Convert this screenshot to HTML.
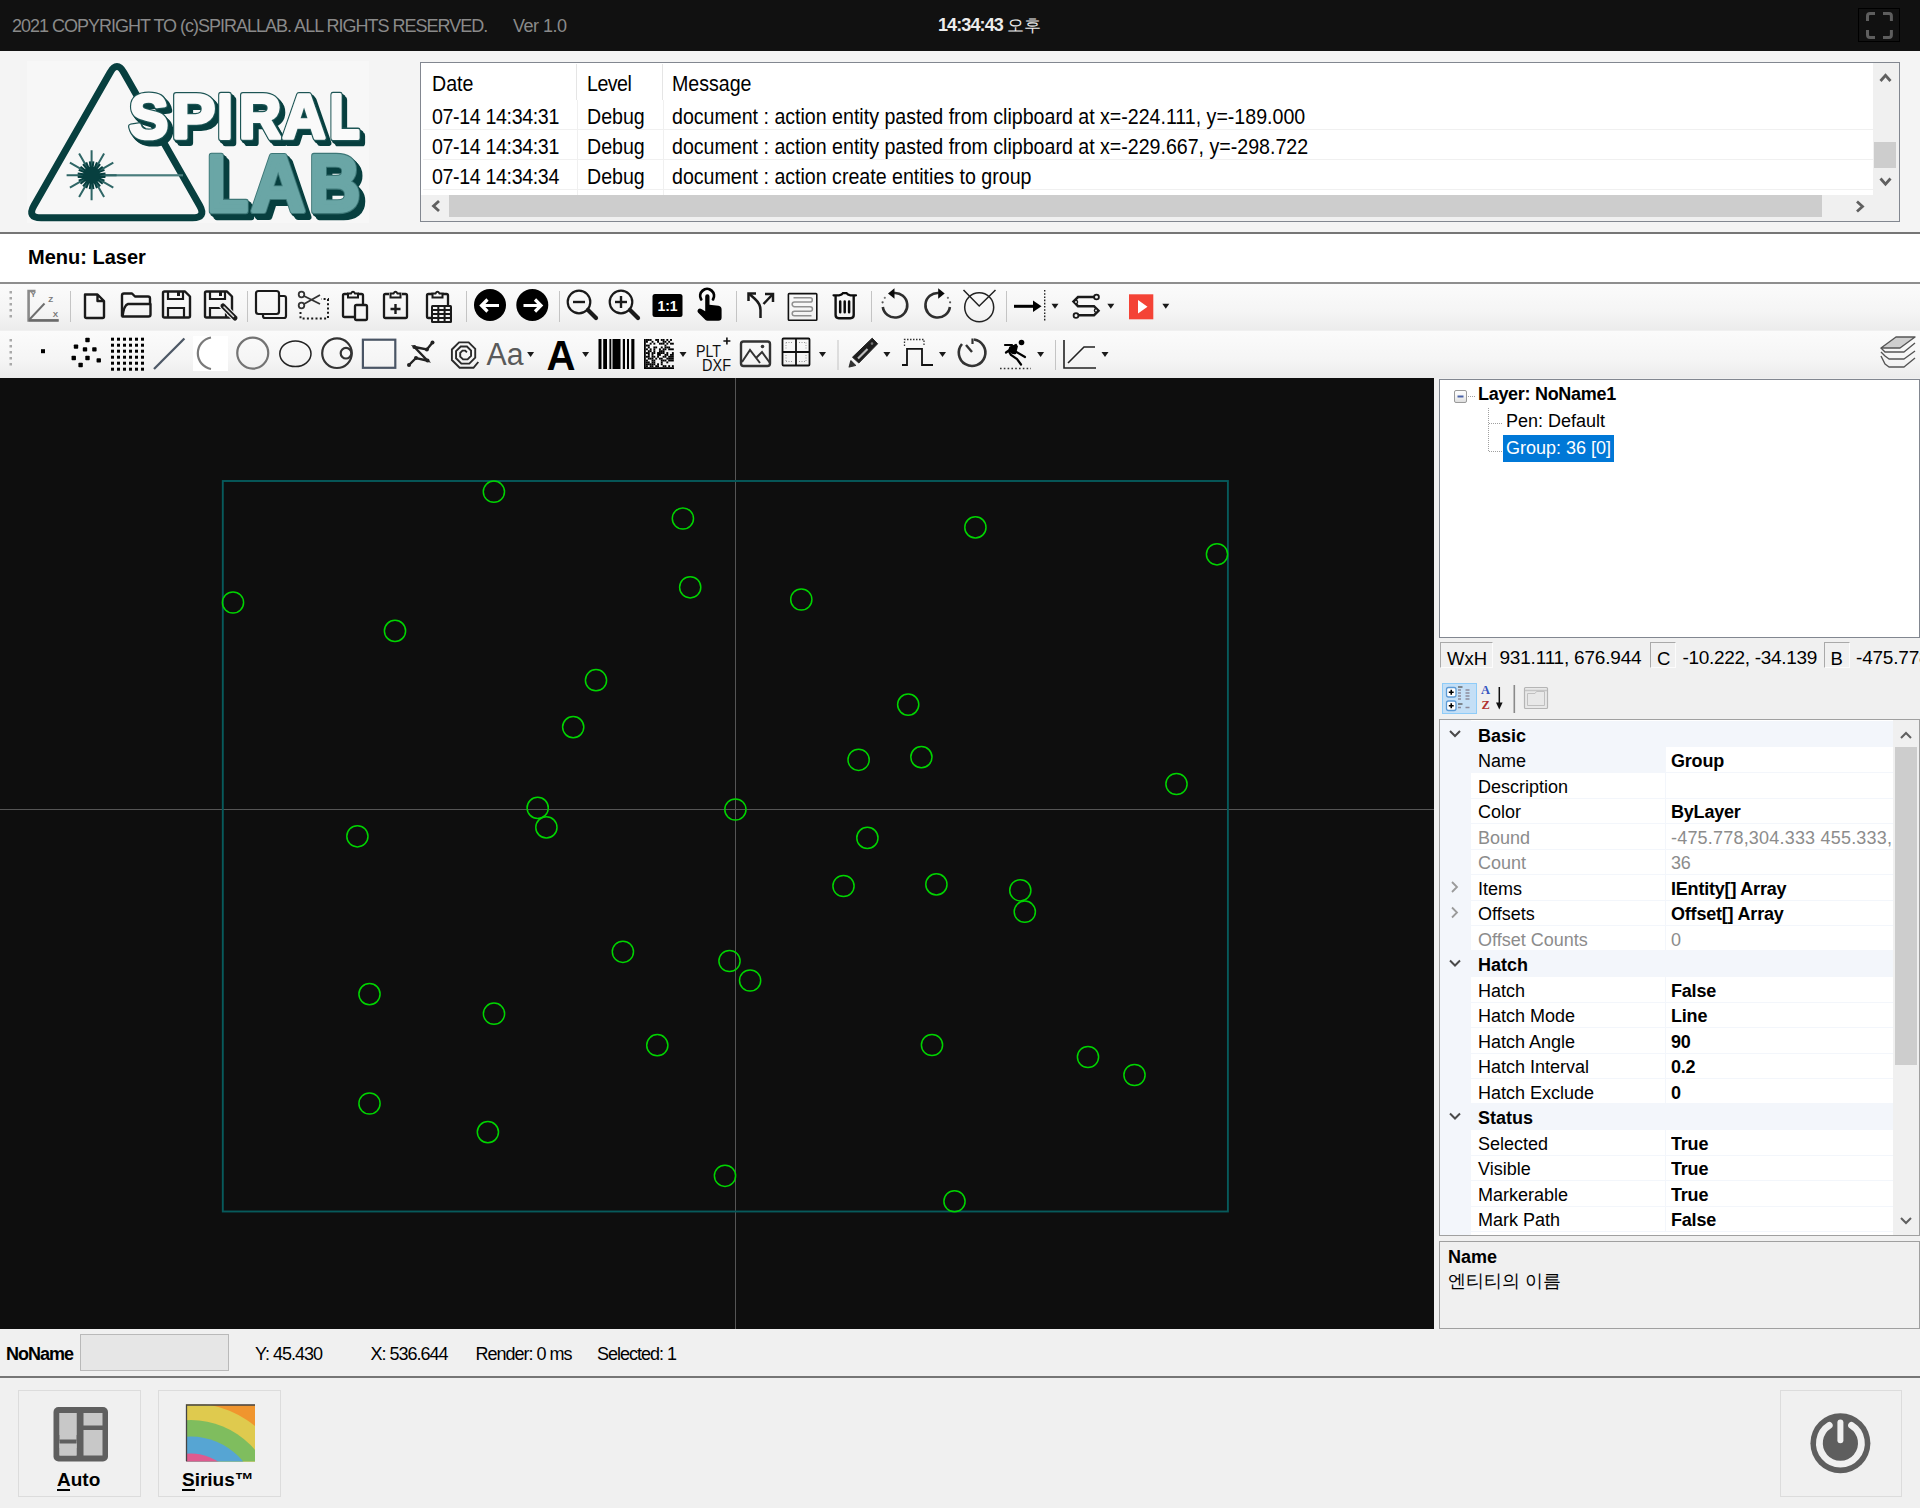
<!DOCTYPE html>
<html><head><meta charset="utf-8">
<style>
*{box-sizing:border-box;margin:0;padding:0}
html,body{width:1920px;height:1508px;overflow:hidden;background:#f0f0f0;font-family:"Liberation Sans",sans-serif;color:#000}
.a{position:absolute;white-space:pre}
#top{left:0;top:0;width:1920px;height:51px;background:#111}
#hdr{left:0;top:51px;width:1920px;height:182px;background:#f4f4f4}
#hline{left:0;top:232px;width:1920px;height:2px;background:#767676}
#menu{left:0;top:234px;width:1920px;height:48px;background:#fff}
#mline{left:0;top:282px;width:1920px;height:2px;background:#8e8e8e}
.tb{left:0;width:1920px;background:linear-gradient(#fbfbfb,#f5f5f5 60%,#ececec)}
#canvas{left:0;top:378px;width:1434px;height:951px;background:#0e0e0e}
#status{left:0;top:1329px;width:1920px;height:47px;background:#f0f0f0}
#sline{left:0;top:1376px;width:1920px;height:2px;background:#767676}
.log{font-size:19.6px;color:#000;transform:scaleY(1.15);transform-origin:0 50%}
.pg{font-size:18px}
.b{font-weight:bold}
</style></head><body>
<div id="top" class="a"></div>
<div class="a" style="left:12px;top:16px;font-size:18px;letter-spacing:-1px;color:#8a8a8a">2021 COPYRIGHT TO (c)SPIRALLAB. ALL RIGHTS RESERVED.</div>
<div class="a" style="left:513px;top:16px;font-size:18px;letter-spacing:-0.5px;color:#8a8a8a">Ver 1.0</div>
<div class="a" style="left:938px;top:15px;font-size:18px;font-weight:bold;letter-spacing:-0.9px;color:#ececec">14:34:43<span style="font-weight:normal;font-size:16.5px;letter-spacing:0"> 오후</span></div>

<div class="a" style="left:1857.5px;top:8px;width:42.5px;height:33.5px;border:1px solid #000"></div><svg class="a" style="left:1850px;top:0" width="60" height="50" viewBox="1850 0 60 50"><path d="M1867.5 21 V16 Q1867.5 13.6 1870 13.6 H1875 M1883 13.6 H1889 Q1891.4 13.6 1891.4 16 V21 M1867.5 30 V35 Q1867.5 37.5 1870 37.5 H1875 M1883 37.5 H1889 Q1891.4 37.5 1891.4 35 V30" fill="none" stroke="#5e5e5e" stroke-width="3"/></svg>
<div id="hdr" class="a"></div>

<div class="a" style="left:27px;top:61px;width:342px;height:162px;background:#f7f7f7"></div>
<!--LOGO--><svg class="a" style="left:0;top:0" width="400" height="240" viewBox="0 0 400 240"><path d="M110.0 72.7 Q117 60.5 123.9 72.7 L199.6 205.6 Q206.5 217.8 192.5 217.8 L41.0 217.8 Q27 217.8 34.0 205.6 Z" fill="none" stroke="#073f3f" stroke-width="7"/><rect x="91" y="174.2" width="92" height="2.2" fill="#4a7d7d"/><path d="M97.6 175.2L116.6 175.2M96.8 178.2L113.3 187.7M94.6 180.4L104.1 196.9M91.6 181.2L91.6 200.2M88.6 180.4L79.1 196.9M86.4 178.2L69.9 187.7M85.6 175.2L66.6 175.2M86.4 172.2L69.9 162.7M88.6 170.0L79.1 153.5M91.6 169.2L91.6 150.2M94.6 170.0L104.1 153.5M96.8 172.2L113.3 162.7" stroke="#2f6666" stroke-width="2"/><path d="M91.6 175.2L105.5 177.0M91.6 175.2L104.5 180.6M91.6 175.2L102.7 183.7M91.6 175.2L100.1 186.3M91.6 175.2L97.0 188.1M91.6 175.2L93.4 189.1M91.6 175.2L89.8 189.1M91.6 175.2L86.2 188.1M91.6 175.2L83.1 186.3M91.6 175.2L80.5 183.7M91.6 175.2L78.7 180.6M91.6 175.2L77.7 177.0M91.6 175.2L77.7 173.4M91.6 175.2L78.7 169.8M91.6 175.2L80.5 166.7M91.6 175.2L83.1 164.1M91.6 175.2L86.2 162.3M91.6 175.2L89.8 161.3M91.6 175.2L93.4 161.3M91.6 175.2L97.0 162.3M91.6 175.2L100.1 164.1M91.6 175.2L102.7 166.7M91.6 175.2L104.5 169.8M91.6 175.2L105.5 173.4" stroke="#073f3f" stroke-width="2"/><circle cx="91.6" cy="175.2" r="8.5" fill="#073f3f"/><text font-family="Liberation Sans" font-weight="bold" font-size="100" transform="matrix(0.5842,0,0,0.6356,130.82,140.03)" fill="#073f3f" stroke="#073f3f" stroke-width="6.0" stroke-linejoin="round" vector-effect="non-scaling-stroke">S</text><text font-family="Liberation Sans" font-weight="bold" font-size="100" transform="matrix(0.5842,0,0,0.6356,132.32,141.68)" fill="#073f3f" stroke="#073f3f" stroke-width="6.0" stroke-linejoin="round" vector-effect="non-scaling-stroke">S</text><text font-family="Liberation Sans" font-weight="bold" font-size="100" transform="matrix(0.5842,0,0,0.6356,133.82,143.33)" fill="#073f3f" stroke="#073f3f" stroke-width="6.0" stroke-linejoin="round" vector-effect="non-scaling-stroke">S</text><text font-family="Liberation Sans" font-weight="bold" font-size="100" transform="matrix(0.6538,0,0,0.6250,173.13,139.65)" fill="#073f3f" stroke="#073f3f" stroke-width="6.0" stroke-linejoin="round" vector-effect="non-scaling-stroke">P</text><text font-family="Liberation Sans" font-weight="bold" font-size="100" transform="matrix(0.6538,0,0,0.6250,174.63,141.30)" fill="#073f3f" stroke="#073f3f" stroke-width="6.0" stroke-linejoin="round" vector-effect="non-scaling-stroke">P</text><text font-family="Liberation Sans" font-weight="bold" font-size="100" transform="matrix(0.6538,0,0,0.6250,176.13,142.95)" fill="#073f3f" stroke="#073f3f" stroke-width="6.0" stroke-linejoin="round" vector-effect="non-scaling-stroke">P</text><text font-family="Liberation Sans" font-weight="bold" font-size="100" transform="matrix(0.5554,0,0,0.6250,218.78,139.65)" fill="#073f3f" stroke="#073f3f" stroke-width="6.0" stroke-linejoin="round" vector-effect="non-scaling-stroke">I</text><text font-family="Liberation Sans" font-weight="bold" font-size="100" transform="matrix(0.5554,0,0,0.6250,220.28,141.30)" fill="#073f3f" stroke="#073f3f" stroke-width="6.0" stroke-linejoin="round" vector-effect="non-scaling-stroke">I</text><text font-family="Liberation Sans" font-weight="bold" font-size="100" transform="matrix(0.5554,0,0,0.6250,221.78,142.95)" fill="#073f3f" stroke="#073f3f" stroke-width="6.0" stroke-linejoin="round" vector-effect="non-scaling-stroke">I</text><text font-family="Liberation Sans" font-weight="bold" font-size="100" transform="matrix(0.5829,0,0,0.6250,240.60,139.65)" fill="#073f3f" stroke="#073f3f" stroke-width="6.0" stroke-linejoin="round" vector-effect="non-scaling-stroke">R</text><text font-family="Liberation Sans" font-weight="bold" font-size="100" transform="matrix(0.5829,0,0,0.6250,242.10,141.30)" fill="#073f3f" stroke="#073f3f" stroke-width="6.0" stroke-linejoin="round" vector-effect="non-scaling-stroke">R</text><text font-family="Liberation Sans" font-weight="bold" font-size="100" transform="matrix(0.5829,0,0,0.6250,243.60,142.95)" fill="#073f3f" stroke="#073f3f" stroke-width="6.0" stroke-linejoin="round" vector-effect="non-scaling-stroke">R</text><text font-family="Liberation Sans" font-weight="bold" font-size="100" transform="matrix(0.5962,0,0,0.6250,284.02,139.65)" fill="#073f3f" stroke="#073f3f" stroke-width="6.0" stroke-linejoin="round" vector-effect="non-scaling-stroke">A</text><text font-family="Liberation Sans" font-weight="bold" font-size="100" transform="matrix(0.5962,0,0,0.6250,285.52,141.30)" fill="#073f3f" stroke="#073f3f" stroke-width="6.0" stroke-linejoin="round" vector-effect="non-scaling-stroke">A</text><text font-family="Liberation Sans" font-weight="bold" font-size="100" transform="matrix(0.5962,0,0,0.6250,287.02,142.95)" fill="#073f3f" stroke="#073f3f" stroke-width="6.0" stroke-linejoin="round" vector-effect="non-scaling-stroke">A</text><text font-family="Liberation Sans" font-weight="bold" font-size="100" transform="matrix(0.4872,0,0,0.6250,331.24,139.65)" fill="#073f3f" stroke="#073f3f" stroke-width="6.0" stroke-linejoin="round" vector-effect="non-scaling-stroke">L</text><text font-family="Liberation Sans" font-weight="bold" font-size="100" transform="matrix(0.4872,0,0,0.6250,332.74,141.30)" fill="#073f3f" stroke="#073f3f" stroke-width="6.0" stroke-linejoin="round" vector-effect="non-scaling-stroke">L</text><text font-family="Liberation Sans" font-weight="bold" font-size="100" transform="matrix(0.4872,0,0,0.6250,334.24,142.95)" fill="#073f3f" stroke="#073f3f" stroke-width="6.0" stroke-linejoin="round" vector-effect="non-scaling-stroke">L</text><text font-family="Liberation Sans" font-weight="bold" font-size="100" transform="matrix(0.5842,0,0,0.6356,129.32,138.38)" fill="#fafafa" stroke="#1d5555" stroke-width="6.0" stroke-linejoin="round" vector-effect="non-scaling-stroke">S</text><text font-family="Liberation Sans" font-weight="bold" font-size="100" transform="matrix(0.5842,0,0,0.6356,129.32,138.38)" fill="#fafafa" stroke="#fafafa" stroke-width="3.6" stroke-linejoin="round" vector-effect="non-scaling-stroke">S</text><text font-family="Liberation Sans" font-weight="bold" font-size="100" transform="matrix(0.6538,0,0,0.6250,171.63,138.00)" fill="#fafafa" stroke="#1d5555" stroke-width="6.0" stroke-linejoin="round" vector-effect="non-scaling-stroke">P</text><text font-family="Liberation Sans" font-weight="bold" font-size="100" transform="matrix(0.6538,0,0,0.6250,171.63,138.00)" fill="#fafafa" stroke="#fafafa" stroke-width="3.6" stroke-linejoin="round" vector-effect="non-scaling-stroke">P</text><text font-family="Liberation Sans" font-weight="bold" font-size="100" transform="matrix(0.5554,0,0,0.6250,217.28,138.00)" fill="#fafafa" stroke="#1d5555" stroke-width="6.0" stroke-linejoin="round" vector-effect="non-scaling-stroke">I</text><text font-family="Liberation Sans" font-weight="bold" font-size="100" transform="matrix(0.5554,0,0,0.6250,217.28,138.00)" fill="#fafafa" stroke="#fafafa" stroke-width="3.6" stroke-linejoin="round" vector-effect="non-scaling-stroke">I</text><text font-family="Liberation Sans" font-weight="bold" font-size="100" transform="matrix(0.5829,0,0,0.6250,239.10,138.00)" fill="#fafafa" stroke="#1d5555" stroke-width="6.0" stroke-linejoin="round" vector-effect="non-scaling-stroke">R</text><text font-family="Liberation Sans" font-weight="bold" font-size="100" transform="matrix(0.5829,0,0,0.6250,239.10,138.00)" fill="#fafafa" stroke="#fafafa" stroke-width="3.6" stroke-linejoin="round" vector-effect="non-scaling-stroke">R</text><text font-family="Liberation Sans" font-weight="bold" font-size="100" transform="matrix(0.5962,0,0,0.6250,282.52,138.00)" fill="#fafafa" stroke="#1d5555" stroke-width="6.0" stroke-linejoin="round" vector-effect="non-scaling-stroke">A</text><text font-family="Liberation Sans" font-weight="bold" font-size="100" transform="matrix(0.5962,0,0,0.6250,282.52,138.00)" fill="#fafafa" stroke="#fafafa" stroke-width="3.6" stroke-linejoin="round" vector-effect="non-scaling-stroke">A</text><text font-family="Liberation Sans" font-weight="bold" font-size="100" transform="matrix(0.4872,0,0,0.6250,329.74,138.00)" fill="#fafafa" stroke="#1d5555" stroke-width="6.0" stroke-linejoin="round" vector-effect="non-scaling-stroke">L</text><text font-family="Liberation Sans" font-weight="bold" font-size="100" transform="matrix(0.4872,0,0,0.6250,329.74,138.00)" fill="#fafafa" stroke="#fafafa" stroke-width="3.6" stroke-linejoin="round" vector-effect="non-scaling-stroke">L</text><text font-family="Liberation Sans" font-weight="bold" font-size="100" transform="matrix(0.6723,0,0,0.7994,208.50,212.65)" fill="#073f3f" stroke="#073f3f" stroke-width="6.0" stroke-linejoin="round" vector-effect="non-scaling-stroke">L</text><text font-family="Liberation Sans" font-weight="bold" font-size="100" transform="matrix(0.6723,0,0,0.7994,210.00,214.30)" fill="#073f3f" stroke="#073f3f" stroke-width="6.0" stroke-linejoin="round" vector-effect="non-scaling-stroke">L</text><text font-family="Liberation Sans" font-weight="bold" font-size="100" transform="matrix(0.6723,0,0,0.7994,211.50,215.95)" fill="#073f3f" stroke="#073f3f" stroke-width="6.0" stroke-linejoin="round" vector-effect="non-scaling-stroke">L</text><text font-family="Liberation Sans" font-weight="bold" font-size="100" transform="matrix(0.6723,0,0,0.7994,212.50,217.05)" fill="#073f3f" stroke="#073f3f" stroke-width="6.0" stroke-linejoin="round" vector-effect="non-scaling-stroke">L</text><text font-family="Liberation Sans" font-weight="bold" font-size="100" transform="matrix(0.7453,0,0,0.7994,252.64,212.65)" fill="#073f3f" stroke="#073f3f" stroke-width="6.0" stroke-linejoin="round" vector-effect="non-scaling-stroke">A</text><text font-family="Liberation Sans" font-weight="bold" font-size="100" transform="matrix(0.7453,0,0,0.7994,254.14,214.30)" fill="#073f3f" stroke="#073f3f" stroke-width="6.0" stroke-linejoin="round" vector-effect="non-scaling-stroke">A</text><text font-family="Liberation Sans" font-weight="bold" font-size="100" transform="matrix(0.7453,0,0,0.7994,255.64,215.95)" fill="#073f3f" stroke="#073f3f" stroke-width="6.0" stroke-linejoin="round" vector-effect="non-scaling-stroke">A</text><text font-family="Liberation Sans" font-weight="bold" font-size="100" transform="matrix(0.7453,0,0,0.7994,256.64,217.05)" fill="#073f3f" stroke="#073f3f" stroke-width="6.0" stroke-linejoin="round" vector-effect="non-scaling-stroke">A</text><text font-family="Liberation Sans" font-weight="bold" font-size="100" transform="matrix(0.7051,0,0,0.7994,310.78,212.65)" fill="#073f3f" stroke="#073f3f" stroke-width="6.0" stroke-linejoin="round" vector-effect="non-scaling-stroke">B</text><text font-family="Liberation Sans" font-weight="bold" font-size="100" transform="matrix(0.7051,0,0,0.7994,312.28,214.30)" fill="#073f3f" stroke="#073f3f" stroke-width="6.0" stroke-linejoin="round" vector-effect="non-scaling-stroke">B</text><text font-family="Liberation Sans" font-weight="bold" font-size="100" transform="matrix(0.7051,0,0,0.7994,313.78,215.95)" fill="#073f3f" stroke="#073f3f" stroke-width="6.0" stroke-linejoin="round" vector-effect="non-scaling-stroke">B</text><text font-family="Liberation Sans" font-weight="bold" font-size="100" transform="matrix(0.7051,0,0,0.7994,314.78,217.05)" fill="#073f3f" stroke="#073f3f" stroke-width="6.0" stroke-linejoin="round" vector-effect="non-scaling-stroke">B</text><text font-family="Liberation Sans" font-weight="bold" font-size="100" transform="matrix(0.6723,0,0,0.7994,207.00,211.00)" fill="#6aa6a6" stroke="#3d7777" stroke-width="6.0" stroke-linejoin="round" vector-effect="non-scaling-stroke">L</text><text font-family="Liberation Sans" font-weight="bold" font-size="100" transform="matrix(0.6723,0,0,0.7994,207.00,211.00)" fill="#6aa6a6" stroke="#6aa6a6" stroke-width="4.0" stroke-linejoin="round" vector-effect="non-scaling-stroke">L</text><text font-family="Liberation Sans" font-weight="bold" font-size="100" transform="matrix(0.7453,0,0,0.7994,251.14,211.00)" fill="#6aa6a6" stroke="#3d7777" stroke-width="6.0" stroke-linejoin="round" vector-effect="non-scaling-stroke">A</text><text font-family="Liberation Sans" font-weight="bold" font-size="100" transform="matrix(0.7453,0,0,0.7994,251.14,211.00)" fill="#6aa6a6" stroke="#6aa6a6" stroke-width="4.0" stroke-linejoin="round" vector-effect="non-scaling-stroke">A</text><text font-family="Liberation Sans" font-weight="bold" font-size="100" transform="matrix(0.7051,0,0,0.7994,309.28,211.00)" fill="#6aa6a6" stroke="#3d7777" stroke-width="6.0" stroke-linejoin="round" vector-effect="non-scaling-stroke">B</text><text font-family="Liberation Sans" font-weight="bold" font-size="100" transform="matrix(0.7051,0,0,0.7994,309.28,211.00)" fill="#6aa6a6" stroke="#6aa6a6" stroke-width="4.0" stroke-linejoin="round" vector-effect="non-scaling-stroke">B</text></svg><!--/LOGO-->
<div class="a" style="left:420px;top:62px;width:1480px;height:160px;border:1px solid #828790;background:#fff"></div>
<div class="a" style="left:576px;top:64px;width:1px;height:36px;background:#e5e5e5"></div>
<div class="a" style="left:662px;top:64px;width:1px;height:36px;background:#e5e5e5"></div>
<div class="a" style="left:577px;top:100px;width:1px;height:95px;background:#f0f0f0"></div>
<div class="a" style="left:663px;top:100px;width:1px;height:95px;background:#f0f0f0"></div>
<div class="a" style="left:423px;top:129px;width:1450px;height:1px;background:#f0f0f0"></div>
<div class="a" style="left:423px;top:159px;width:1450px;height:1px;background:#f0f0f0"></div>
<div class="a" style="left:423px;top:189px;width:1450px;height:1px;background:#f0f0f0"></div>
<div class="a log" style="left:432px;top:72px">Date</div>
<div class="a log" style="left:587px;top:72px;letter-spacing:-0.5px">Level</div>
<div class="a log" style="left:672px;top:72px">Message</div>
<div class="a log" style="left:432px;top:105px;letter-spacing:-0.35px">07-14 14:34:31</div>
<div class="a log" style="left:587px;top:105px">Debug</div>
<div class="a log" style="left:672px;top:105px">document : action entity pasted from clipboard at x=-224.111, y=-189.000</div>
<div class="a log" style="left:432px;top:135px;letter-spacing:-0.35px">07-14 14:34:31</div>
<div class="a log" style="left:587px;top:135px">Debug</div>
<div class="a log" style="left:672px;top:135px">document : action entity pasted from clipboard at x=-229.667, y=-298.722</div>
<div class="a log" style="left:432px;top:165px;letter-spacing:-0.35px">07-14 14:34:34</div>
<div class="a log" style="left:587px;top:165px">Debug</div>
<div class="a log" style="left:672px;top:165px">document : action create entities to group</div>
<!-- v scrollbar -->
<div class="a" style="left:1873px;top:63px;width:26px;height:132px;background:#f0f0f0"></div>
<div class="a" style="left:1874px;top:142px;width:22px;height:26px;background:#cdcdcd"></div>
<svg class="a" style="left:1873px;top:63px" width="26" height="132"><path d="M7.5 18 L12.5 12.3 L17.5 18" fill="none" stroke="#606060" stroke-width="2.8"/><path d="M7.5 115.5 L12.5 121.2 L17.5 115.5" fill="none" stroke="#606060" stroke-width="2.8"/></svg>
<!-- h scrollbar -->
<div class="a" style="left:421px;top:195px;width:1478px;height:26px;background:#f0f0f0"></div>
<div class="a" style="left:449px;top:195px;width:1373px;height:22px;background:#cdcdcd"></div>
<svg class="a" style="left:421px;top:195px" width="1478" height="26"><path d="M18 6 L12.5 11 L18 16" fill="none" stroke="#606060" stroke-width="2.8"/><path d="M1436 6.5 L1441.5 11.5 L1436 16.5" fill="none" stroke="#606060" stroke-width="2.8"/></svg>
<div class="a" style="left:1873px;top:195px;width:26px;height:26px;background:#f0f0f0"></div>
<div id="hline" class="a"></div>
<div id="menu" class="a"></div>
<div class="a b" style="left:28px;top:246px;font-size:20px;color:#000">Menu: Laser</div>
<div class="a tb" style="top:283px;height:47px"></div>
<div class="a tb" style="top:331px;height:47px"></div>
<div id="mline" class="a"></div>

<!--TB--><svg class="a" style="left:0;top:0" width="1920" height="378"><rect x="9.5" y="291" width="2.5" height="2.5" fill="#a9a9a9"/><rect x="9.5" y="297" width="2.5" height="2.5" fill="#a9a9a9"/><rect x="9.5" y="303" width="2.5" height="2.5" fill="#a9a9a9"/><rect x="9.5" y="309" width="2.5" height="2.5" fill="#a9a9a9"/><rect x="9.5" y="315" width="2.5" height="2.5" fill="#a9a9a9"/><rect x="9.5" y="339" width="2.5" height="2.5" fill="#a9a9a9"/><rect x="9.5" y="345" width="2.5" height="2.5" fill="#a9a9a9"/><rect x="9.5" y="351" width="2.5" height="2.5" fill="#a9a9a9"/><rect x="9.5" y="357" width="2.5" height="2.5" fill="#a9a9a9"/><rect x="9.5" y="363" width="2.5" height="2.5" fill="#a9a9a9"/><path d="M35.5 291 H28.6 V320.4 H58.6" fill="none" stroke="#8a8a8a" stroke-width="2.6"/><path d="M28.6 320.4 H58.6" fill="none" stroke="#6a6a6a" stroke-width="2.2"/><path d="M29.5 319.5 L44.5 303.5" fill="none" stroke="#6e6e6e" stroke-width="2"/><text x="30.8" y="297" font-family="Liberation Sans" font-weight="bold" font-size="7.5" fill="#777">Y</text><text x="48.3" y="302" font-family="Liberation Sans" font-weight="bold" font-size="8" fill="#777">Z</text><text x="52.8" y="317" font-family="Liberation Sans" font-weight="bold" font-size="8" fill="#777">X</text><rect x="70" y="291" width="1" height="31" fill="#c4c4c4"/><path d="M85 294.5 H97.5 L104 301 V316.5 Q104 318 102.5 318 H86.5 Q85 318 85 316.5 Z M97.5 294.5 V301 H104" fill="none" stroke="#1a1a1a" stroke-width="2.4" stroke-linejoin="round"/><path d="M122 316.5 V295.5 Q122 293.5 124 293.5 H132 L135 296.5 H148 Q150 296.5 150 298.5 V303" fill="none" stroke="#1a1a1a" stroke-width="2.4" stroke-linejoin="round"/><path d="M122.5 316.5 Q124 305 128 304 H150.5 V314.5 Q150.5 316.5 148.5 316.5 Z" fill="none" stroke="#1a1a1a" stroke-width="2.4" stroke-linejoin="round"/><path d="M163 293 Q163 291.5 164.5 291.5 H185 L190 296.5 V316 Q190 317.5 188.5 317.5 H164.5 Q163 317.5 163 316 Z" fill="none" stroke="#1a1a1a" stroke-width="2.4" stroke-linejoin="round"/><path d="M168 292 V299 H183 V292" fill="none" stroke="#1a1a1a" stroke-width="2.2"/><rect x="177" y="292" width="3" height="4" fill="#1a1a1a"/><path d="M168 317 V308 H184 V317" fill="none" stroke="#1a1a1a" stroke-width="2.2"/><path d="M205 293 Q205 291.5 206.5 291.5 H227 L232 296.5 V316 Q232 317.5 230.5 317.5 H206.5 Q205 317.5 205 316 Z" fill="none" stroke="#1a1a1a" stroke-width="2.4" stroke-linejoin="round"/><path d="M210 292 V299 H225 V292" fill="none" stroke="#1a1a1a" stroke-width="2.2"/><rect x="219" y="292" width="3" height="4" fill="#1a1a1a"/><path d="M210 317 V308 H226 V317" fill="none" stroke="#1a1a1a" stroke-width="2.2"/><rect x="204" y="300" width="0" height="0"/><path d="M222 305 L236 319" stroke="#f5f5f5" stroke-width="7" stroke-linecap="round"/><path d="M223 306 L235 318" stroke="#1a1a1a" stroke-width="5" stroke-linecap="round"/><path d="M224 307 L233.5 316.5" stroke="#ddd" stroke-width="1.5" stroke-linecap="round"/><rect x="247" y="291" width="1" height="31" fill="#c4c4c4"/><rect x="256" y="291" width="23" height="23" rx="2.5" fill="none" stroke="#1a1a1a" stroke-width="2.2"/><path d="M263 314 V316 Q263 318 265 318 H284 Q286 318 286 316 V298 Q286 296 284 296 H279" fill="none" stroke="#1a1a1a" stroke-width="2.2"/><circle cx="301.5" cy="294.5" r="2.8" fill="none" stroke="#333" stroke-width="1.8"/><circle cx="301.5" cy="305.5" r="2.8" fill="none" stroke="#333" stroke-width="1.8"/><path d="M304 296 L320 304 M304 304 L320 295" stroke="#333" stroke-width="1.8"/><path d="M300.5 312 V318.5 H328 V299 H321" fill="none" stroke="#1a1a1a" stroke-width="2" stroke-dasharray="2 2.3"/><path d="M348 294 H344.5 Q343 294 343 295.5 V315.5 Q343 317 344.5 317 H361.5 Q363 317 363 315.5 V295.5 Q363 294 361.5 294 H358" fill="none" stroke="#1a1a1a" stroke-width="2.3"/><path d="M348.0 297.5 V293.5 H351.0 Q353.0 290 355.0 293.5 H358.0 V297.5 Z" fill="none" stroke="#1a1a1a" stroke-width="2"/><rect x="355" y="305" width="12" height="15" rx="1.5" fill="#f6f6f6" stroke="#1a1a1a" stroke-width="2.3"/><path d="M389 294 H385.5 Q384 294 384 295.5 V316.5 Q384 318 385.5 318 H405.5 Q407 318 407 316.5 V295.5 Q407 294 405.5 294 H402" fill="none" stroke="#1a1a1a" stroke-width="2.3"/><path d="M390.5 297.5 V293.5 H393.5 Q395.5 290 397.5 293.5 H400.5 V297.5 Z" fill="none" stroke="#1a1a1a" stroke-width="2"/><path d="M395.5 304 V314 M390.5 309 H400.5" stroke="#1a1a1a" stroke-width="2.4"/><path d="M432 294 H428.5 Q427 294 427 295.5 V316.5 Q427 318 428.5 318 H446.5 Q448 318 448 316.5 V295.5 Q448 294 446.5 294 H443" fill="none" stroke="#1a1a1a" stroke-width="2.3"/><path d="M432.5 297.5 V293.5 H435.5 Q437.5 290 439.5 293.5 H442.5 V297.5 Z" fill="none" stroke="#1a1a1a" stroke-width="2"/><rect x="431" y="305" width="21" height="18" rx="1.5" fill="#1a1a1a"/><rect x="433.0" y="307" width="4.3" height="2" fill="#f5f5f5"/><rect x="439.3" y="307" width="4.3" height="2" fill="#f5f5f5"/><rect x="445.6" y="307" width="4.3" height="2" fill="#f5f5f5"/><rect x="433.0" y="311" width="4.3" height="2" fill="#f5f5f5"/><rect x="439.3" y="311" width="4.3" height="2" fill="#f5f5f5"/><rect x="445.6" y="311" width="4.3" height="2" fill="#f5f5f5"/><rect x="433.0" y="315" width="4.3" height="2" fill="#f5f5f5"/><rect x="439.3" y="315" width="4.3" height="2" fill="#f5f5f5"/><rect x="445.6" y="315" width="4.3" height="2" fill="#f5f5f5"/><rect x="433.0" y="319" width="4.3" height="2" fill="#f5f5f5"/><rect x="439.3" y="319" width="4.3" height="2" fill="#f5f5f5"/><rect x="445.6" y="319" width="4.3" height="2" fill="#f5f5f5"/><rect x="466" y="291" width="1" height="31" fill="#c4c4c4"/><circle cx="490" cy="305" r="16" fill="#000"/><path d="M499 305.5 H482 M487.5 299.5 L481.5 305.5 L487.5 311.5" fill="none" stroke="#fff" stroke-width="3.2"/><circle cx="532.3" cy="305" r="16" fill="#000"/><path d="M523.5 305.5 H541 M535 299.5 L541 305.5 L535 311.5" fill="none" stroke="#fff" stroke-width="3.2"/><rect x="559" y="291" width="1" height="31" fill="#c4c4c4"/><circle cx="579" cy="302" r="11.3" fill="none" stroke="#1a1a1a" stroke-width="2.2"/><path d="M588 310 L596 318" stroke="#1a1a1a" stroke-width="4.2" stroke-linecap="round"/><path d="M573 302 H585" stroke="#1a1a1a" stroke-width="2.4"/><circle cx="621" cy="302" r="11.3" fill="none" stroke="#1a1a1a" stroke-width="2.2"/><path d="M630 310 L638 318" stroke="#1a1a1a" stroke-width="4.2" stroke-linecap="round"/><path d="M615 302 H627" stroke="#1a1a1a" stroke-width="2.4"/><path d="M621 296 V308" stroke="#1a1a1a" stroke-width="2.4"/><rect x="652.5" y="294" width="30" height="23" rx="2.5" fill="#000"/><text x="667.5" y="311" text-anchor="middle" font-family="Liberation Sans" font-weight="bold" font-size="14" fill="#fff">1:1</text><path d="M701.2 299.4 A6.9 6.9 0 1 1 713 299.4" fill="none" stroke="#000" stroke-width="2.8" stroke-linecap="round"/><path d="M705.2 296.5 Q705.2 294.2 707.35 294.2 Q709.5 294.2 709.5 296.5 V304.8 L718.5 305.8 Q721.6 306.3 721.6 309.5 V317.5 Q721.6 320.8 718.3 320.8 H707.5 Q706.3 320.8 705.5 320 L698 312.5 Q696.7 311 698.2 309.3 Q699.6 307.9 701.4 308.9 L705.2 311.2 Z" fill="#000"/><rect x="736" y="291" width="1" height="31" fill="#c4c4c4"/><path d="M760.5 318 V310 Q760.5 304 755 299 L749.5 294" fill="none" stroke="#1a1a1a" stroke-width="2.5"/><path d="M748.5 301 V293.5 H756" fill="none" stroke="#1a1a1a" stroke-width="2.5"/><path d="M763.5 304 L772 295" fill="none" stroke="#1a1a1a" stroke-width="2.5"/><path d="M765 294 H773 V302" fill="none" stroke="#1a1a1a" stroke-width="2.5"/><rect x="788.4" y="293.6" width="28.4" height="26.6" rx="0.8" fill="none" stroke="#111" stroke-width="1.6"/><path d="M793.5 297.8 H810.2 A2.1 2.1 0 0 1 810.2 302 H794.5 A2.35 2.35 0 0 0 794.5 306.7 H810.2 A2.25 2.25 0 0 1 810.2 311.2 H794.5 A2.3 2.3 0 0 0 794.5 315.8 H811.5" fill="none" stroke="#909090" stroke-width="1.5"/><path d="M833.5 295.3 H839 Q842 294.8 843 293.2 H846.5 Q847.5 294.8 850.5 295.3 H856" fill="none" stroke="#0a0a0a" stroke-width="2.2" stroke-linecap="round"/><path d="M835.6 296 V315 Q835.6 318.2 838.8 318.2 H850.5 Q853.7 318.2 853.7 315 V296" fill="none" stroke="#111" stroke-width="2.4"/><path d="M840.2 301.5 V312.3 M844.7 301.5 V312.3 M849.1 301.5 V312.3" stroke="#0a0a0a" stroke-width="2.5" stroke-linecap="round"/><rect x="871" y="291" width="1" height="31" fill="#c4c4c4"/><path d="M894 293 A12.3 12.3 0 1 1 882.8 307" fill="none" stroke="#2e2e2e" stroke-width="2.6"/><circle cx="882.6" cy="302.3" r="1.1" fill="#555"/><circle cx="884.8" cy="297.8" r="1.1" fill="#777"/><path d="M894.5 288.3 L888 293.5 L894.5 298.7 Z" fill="#0a0a0a"/><path d="M938.7 293 A12.3 12.3 0 1 0 949.9 307" fill="none" stroke="#2e2e2e" stroke-width="2.6"/><circle cx="950.1" cy="302.3" r="1.1" fill="#555"/><circle cx="947.9" cy="297.8" r="1.1" fill="#777"/><path d="M938.2 288.3 L944.7 293.5 L938.2 298.7 Z" fill="#0a0a0a"/><circle cx="979.2" cy="307.2" r="14.5" fill="none" stroke="#222" stroke-width="1.5"/><path d="M963.5 290 L979.2 306 L995.5 290" fill="none" stroke="#222" stroke-width="1.5"/><rect x="1006" y="291" width="1" height="31" fill="#c4c4c4"/><path d="M1014 306.3 H1035" stroke="#000" stroke-width="3"/><path d="M1033 300.5 L1041.5 306.3 L1033 312 Z" fill="#000"/><path d="M1044.7 290 V321" stroke="#222" stroke-width="1.4" stroke-dasharray="1.6 1.6"/><path d="M1051.5 303.8 H1058.5 L1055 308.8 Z" fill="#1a1a1a"/><path d="M1096.5 297 H1078 L1073.5 301.5 L1078 306.2 H1094 L1098.5 310.7 L1094 315.3 H1076" fill="none" stroke="#1a1a1a" stroke-width="2.5"/><circle cx="1096.5" cy="297" r="2.4" fill="#f5f5f5" stroke="#1a1a1a" stroke-width="1.8"/><circle cx="1076" cy="315.5" r="2.4" fill="#f5f5f5" stroke="#1a1a1a" stroke-width="1.8"/><circle cx="1076" cy="302" r="1.6" fill="#f5f5f5" stroke="#1a1a1a" stroke-width="1.4"/><circle cx="1096" cy="310.5" r="1.6" fill="#f5f5f5" stroke="#1a1a1a" stroke-width="1.4"/><path d="M1107.3 303.8 H1114.3 L1110.8 308.8 Z" fill="#1a1a1a"/><rect x="1129" y="294.3" width="24.3" height="25" fill="#f44336"/><path d="M1138 300 L1147.5 306.8 L1138 313.5 Z" fill="#fff"/><path d="M1162.3 303.8 H1169.3 L1165.8 308.8 Z" fill="#1a1a1a"/><rect x="41" y="349.2" width="4" height="4" fill="#000"/><rect x="85.3" y="337.8" width="4.4" height="4.4" rx="0.8" fill="#000"/><rect x="73.8" y="344.40000000000003" width="4.4" height="4.4" rx="0.8" fill="#000"/><rect x="82.8" y="347.2" width="4.4" height="4.4" rx="0.8" fill="#000"/><rect x="92.2" y="347.2" width="4.4" height="4.4" rx="0.8" fill="#000"/><rect x="71.55" y="355.8" width="4.4" height="4.4" rx="0.8" fill="#000"/><rect x="85.3" y="355.8" width="4.4" height="4.4" rx="0.8" fill="#000"/><rect x="96.55" y="358.2" width="4.4" height="4.4" rx="0.8" fill="#000"/><rect x="78.39999999999999" y="362.8" width="4.4" height="4.4" rx="0.8" fill="#000"/><rect x="111" y="337.7" width="3" height="3" fill="#000"/><rect x="117" y="337.7" width="3" height="3" fill="#000"/><rect x="123" y="337.7" width="3" height="3" fill="#000"/><rect x="129" y="337.7" width="3" height="3" fill="#000"/><rect x="135" y="337.7" width="3" height="3" fill="#000"/><rect x="141" y="337.7" width="3" height="3" fill="#000"/><rect x="111" y="343.7" width="3" height="3" fill="#000"/><rect x="117" y="343.7" width="3" height="3" fill="#000"/><rect x="123" y="343.7" width="3" height="3" fill="#000"/><rect x="129" y="343.7" width="3" height="3" fill="#000"/><rect x="135" y="343.7" width="3" height="3" fill="#000"/><rect x="141" y="343.7" width="3" height="3" fill="#000"/><rect x="111" y="349.7" width="3" height="3" fill="#000"/><rect x="117" y="349.7" width="3" height="3" fill="#000"/><rect x="123" y="349.7" width="3" height="3" fill="#000"/><rect x="129" y="349.7" width="3" height="3" fill="#000"/><rect x="135" y="349.7" width="3" height="3" fill="#000"/><rect x="141" y="349.7" width="3" height="3" fill="#000"/><rect x="111" y="355.7" width="3" height="3" fill="#000"/><rect x="117" y="355.7" width="3" height="3" fill="#000"/><rect x="123" y="355.7" width="3" height="3" fill="#000"/><rect x="129" y="355.7" width="3" height="3" fill="#000"/><rect x="135" y="355.7" width="3" height="3" fill="#000"/><rect x="141" y="355.7" width="3" height="3" fill="#000"/><rect x="111" y="361.7" width="3" height="3" fill="#000"/><rect x="117" y="361.7" width="3" height="3" fill="#000"/><rect x="123" y="361.7" width="3" height="3" fill="#000"/><rect x="129" y="361.7" width="3" height="3" fill="#000"/><rect x="135" y="361.7" width="3" height="3" fill="#000"/><rect x="141" y="361.7" width="3" height="3" fill="#000"/><rect x="111" y="367.7" width="3" height="3" fill="#000"/><rect x="117" y="367.7" width="3" height="3" fill="#000"/><rect x="123" y="367.7" width="3" height="3" fill="#000"/><rect x="129" y="367.7" width="3" height="3" fill="#000"/><rect x="135" y="367.7" width="3" height="3" fill="#000"/><rect x="141" y="367.7" width="3" height="3" fill="#000"/><path d="M154 369 L184.4 338.5" stroke="#4d5866" stroke-width="2.3"/><rect x="193" y="336" width="35" height="35" fill="#fff"/><path d="M211 337.5 A16 16 0 0 0 211 369" fill="none" stroke="#7a7a7a" stroke-width="2.2"/><circle cx="252.75" cy="353.1" r="15.5" fill="none" stroke="#737373" stroke-width="2.2"/><ellipse cx="295.4" cy="353.75" rx="15.6" ry="12.8" fill="none" stroke="#222" stroke-width="1.5"/><circle cx="337" cy="353.2" r="14.8" fill="none" stroke="#333" stroke-width="2.2"/><circle cx="346" cy="353.2" r="5.3" fill="#f8f8f8" stroke="#333" stroke-width="2.2"/><rect x="362.9" y="339.7" width="32.4" height="28.1" fill="none" stroke="#4a5565" stroke-width="2.2"/><path d="M409 365 L416 358 L427.5 360.6 L414.4 347 L426.9 349.4 L432.5 342.5" fill="none" stroke="#222" stroke-width="2.4"/><circle cx="409" cy="365" r="2" fill="#222"/><circle cx="416" cy="358" r="2" fill="#222"/><circle cx="427.5" cy="360.6" r="2" fill="#222"/><circle cx="414.4" cy="347" r="2" fill="#222"/><circle cx="426.9" cy="349.4" r="2" fill="#222"/><circle cx="432.5" cy="342.5" r="2" fill="#222"/><polyline points="466.90,352.31 465.25,350.66 462.48,350.66 460.22,352.92 460.22,356.55 463.09,359.42 467.58,359.42 471.06,355.94 471.06,350.59 466.97,346.50 460.76,346.50 456.06,351.20 456.06,358.27 461.37,363.58 469.30,363.58 475.22,357.66 475.22,348.87 468.69,342.34 459.03,342.34 451.90,349.47 451.90,360.00 459.64,367.74 473.50,367.74 478.3,362" fill="none" stroke="#2a2a2a" stroke-width="1.9" stroke-linejoin="miter"/><text x="486.5" y="365" font-family="Liberation Sans" font-size="31" fill="#5a5a5a" textLength="37" lengthAdjust="spacingAndGlyphs">Aa</text><path d="M527.1 351.9 H534.1 L530.6 356.9 Z" fill="#1a1a1a"/><text x="546.5" y="370" font-family="Liberation Sans" font-weight="bold" font-size="42" fill="#000" textLength="29" lengthAdjust="spacingAndGlyphs">A</text><path d="M582.1 351.9 H589.1 L585.6 356.9 Z" fill="#1a1a1a"/><rect x="598.5" y="339" width="3" height="30" fill="#000"/><rect x="603.2" y="339" width="3.8" height="30" fill="#000"/><rect x="609.4" y="339" width="1.9" height="30" fill="#000"/><rect x="612.5" y="339" width="8" height="30" fill="#000"/><rect x="622.8" y="339" width="2.2" height="30" fill="#000"/><rect x="627" y="339" width="2" height="30" fill="#000"/><rect x="631.3" y="339" width="3.1" height="30" fill="#000"/><rect x="644" y="339" width="1.8" height="30" fill="#000"/><rect x="644" y="367.2" width="30" height="1.8" fill="#000"/><rect x="646.00" y="339.00" width="1.9" height="1.9" fill="#000"/><rect x="647.85" y="339.00" width="1.9" height="1.9" fill="#000"/><rect x="649.70" y="339.00" width="1.9" height="1.9" fill="#000"/><rect x="655.25" y="339.00" width="1.9" height="1.9" fill="#000"/><rect x="657.10" y="339.00" width="1.9" height="1.9" fill="#000"/><rect x="660.80" y="339.00" width="1.9" height="1.9" fill="#000"/><rect x="662.65" y="339.00" width="1.9" height="1.9" fill="#000"/><rect x="666.35" y="339.00" width="1.9" height="1.9" fill="#000"/><rect x="670.05" y="339.00" width="1.9" height="1.9" fill="#000"/><rect x="646.00" y="340.87" width="1.9" height="1.9" fill="#000"/><rect x="651.55" y="340.87" width="1.9" height="1.9" fill="#000"/><rect x="657.10" y="340.87" width="1.9" height="1.9" fill="#000"/><rect x="662.65" y="340.87" width="1.9" height="1.9" fill="#000"/><rect x="664.50" y="340.87" width="1.9" height="1.9" fill="#000"/><rect x="668.20" y="340.87" width="1.9" height="1.9" fill="#000"/><rect x="649.70" y="342.74" width="1.9" height="1.9" fill="#000"/><rect x="653.40" y="342.74" width="1.9" height="1.9" fill="#000"/><rect x="658.95" y="342.74" width="1.9" height="1.9" fill="#000"/><rect x="660.80" y="342.74" width="1.9" height="1.9" fill="#000"/><rect x="662.65" y="342.74" width="1.9" height="1.9" fill="#000"/><rect x="666.35" y="342.74" width="1.9" height="1.9" fill="#000"/><rect x="670.05" y="342.74" width="1.9" height="1.9" fill="#000"/><rect x="671.90" y="342.74" width="1.9" height="1.9" fill="#000"/><rect x="646.00" y="344.61" width="1.9" height="1.9" fill="#000"/><rect x="647.85" y="344.61" width="1.9" height="1.9" fill="#000"/><rect x="664.50" y="344.61" width="1.9" height="1.9" fill="#000"/><rect x="647.85" y="346.48" width="1.9" height="1.9" fill="#000"/><rect x="653.40" y="346.48" width="1.9" height="1.9" fill="#000"/><rect x="655.25" y="346.48" width="1.9" height="1.9" fill="#000"/><rect x="660.80" y="346.48" width="1.9" height="1.9" fill="#000"/><rect x="664.50" y="346.48" width="1.9" height="1.9" fill="#000"/><rect x="666.35" y="346.48" width="1.9" height="1.9" fill="#000"/><rect x="668.20" y="346.48" width="1.9" height="1.9" fill="#000"/><rect x="646.00" y="348.35" width="1.9" height="1.9" fill="#000"/><rect x="649.70" y="348.35" width="1.9" height="1.9" fill="#000"/><rect x="653.40" y="348.35" width="1.9" height="1.9" fill="#000"/><rect x="658.95" y="348.35" width="1.9" height="1.9" fill="#000"/><rect x="662.65" y="348.35" width="1.9" height="1.9" fill="#000"/><rect x="664.50" y="348.35" width="1.9" height="1.9" fill="#000"/><rect x="668.20" y="348.35" width="1.9" height="1.9" fill="#000"/><rect x="670.05" y="348.35" width="1.9" height="1.9" fill="#000"/><rect x="671.90" y="348.35" width="1.9" height="1.9" fill="#000"/><rect x="647.85" y="350.22" width="1.9" height="1.9" fill="#000"/><rect x="649.70" y="350.22" width="1.9" height="1.9" fill="#000"/><rect x="653.40" y="350.22" width="1.9" height="1.9" fill="#000"/><rect x="658.95" y="350.22" width="1.9" height="1.9" fill="#000"/><rect x="660.80" y="350.22" width="1.9" height="1.9" fill="#000"/><rect x="662.65" y="350.22" width="1.9" height="1.9" fill="#000"/><rect x="646.00" y="352.09" width="1.9" height="1.9" fill="#000"/><rect x="647.85" y="352.09" width="1.9" height="1.9" fill="#000"/><rect x="651.55" y="352.09" width="1.9" height="1.9" fill="#000"/><rect x="653.40" y="352.09" width="1.9" height="1.9" fill="#000"/><rect x="657.10" y="352.09" width="1.9" height="1.9" fill="#000"/><rect x="658.95" y="352.09" width="1.9" height="1.9" fill="#000"/><rect x="660.80" y="352.09" width="1.9" height="1.9" fill="#000"/><rect x="662.65" y="352.09" width="1.9" height="1.9" fill="#000"/><rect x="666.35" y="352.09" width="1.9" height="1.9" fill="#000"/><rect x="671.90" y="352.09" width="1.9" height="1.9" fill="#000"/><rect x="647.85" y="353.96" width="1.9" height="1.9" fill="#000"/><rect x="651.55" y="353.96" width="1.9" height="1.9" fill="#000"/><rect x="657.10" y="353.96" width="1.9" height="1.9" fill="#000"/><rect x="658.95" y="353.96" width="1.9" height="1.9" fill="#000"/><rect x="664.50" y="353.96" width="1.9" height="1.9" fill="#000"/><rect x="666.35" y="353.96" width="1.9" height="1.9" fill="#000"/><rect x="670.05" y="353.96" width="1.9" height="1.9" fill="#000"/><rect x="671.90" y="353.96" width="1.9" height="1.9" fill="#000"/><rect x="646.00" y="355.83" width="1.9" height="1.9" fill="#000"/><rect x="647.85" y="355.83" width="1.9" height="1.9" fill="#000"/><rect x="651.55" y="355.83" width="1.9" height="1.9" fill="#000"/><rect x="653.40" y="355.83" width="1.9" height="1.9" fill="#000"/><rect x="657.10" y="355.83" width="1.9" height="1.9" fill="#000"/><rect x="662.65" y="355.83" width="1.9" height="1.9" fill="#000"/><rect x="664.50" y="355.83" width="1.9" height="1.9" fill="#000"/><rect x="668.20" y="355.83" width="1.9" height="1.9" fill="#000"/><rect x="670.05" y="355.83" width="1.9" height="1.9" fill="#000"/><rect x="671.90" y="355.83" width="1.9" height="1.9" fill="#000"/><rect x="647.85" y="357.70" width="1.9" height="1.9" fill="#000"/><rect x="649.70" y="357.70" width="1.9" height="1.9" fill="#000"/><rect x="651.55" y="357.70" width="1.9" height="1.9" fill="#000"/><rect x="655.25" y="357.70" width="1.9" height="1.9" fill="#000"/><rect x="658.95" y="357.70" width="1.9" height="1.9" fill="#000"/><rect x="660.80" y="357.70" width="1.9" height="1.9" fill="#000"/><rect x="666.35" y="357.70" width="1.9" height="1.9" fill="#000"/><rect x="668.20" y="357.70" width="1.9" height="1.9" fill="#000"/><rect x="670.05" y="357.70" width="1.9" height="1.9" fill="#000"/><rect x="671.90" y="357.70" width="1.9" height="1.9" fill="#000"/><rect x="646.00" y="359.57" width="1.9" height="1.9" fill="#000"/><rect x="651.55" y="359.57" width="1.9" height="1.9" fill="#000"/><rect x="653.40" y="359.57" width="1.9" height="1.9" fill="#000"/><rect x="660.80" y="359.57" width="1.9" height="1.9" fill="#000"/><rect x="662.65" y="359.57" width="1.9" height="1.9" fill="#000"/><rect x="664.50" y="359.57" width="1.9" height="1.9" fill="#000"/><rect x="668.20" y="359.57" width="1.9" height="1.9" fill="#000"/><rect x="670.05" y="359.57" width="1.9" height="1.9" fill="#000"/><rect x="671.90" y="359.57" width="1.9" height="1.9" fill="#000"/><rect x="646.00" y="361.44" width="1.9" height="1.9" fill="#000"/><rect x="647.85" y="361.44" width="1.9" height="1.9" fill="#000"/><rect x="651.55" y="361.44" width="1.9" height="1.9" fill="#000"/><rect x="653.40" y="361.44" width="1.9" height="1.9" fill="#000"/><rect x="660.80" y="361.44" width="1.9" height="1.9" fill="#000"/><rect x="666.35" y="361.44" width="1.9" height="1.9" fill="#000"/><rect x="646.00" y="363.31" width="1.9" height="1.9" fill="#000"/><rect x="647.85" y="363.31" width="1.9" height="1.9" fill="#000"/><rect x="649.70" y="363.31" width="1.9" height="1.9" fill="#000"/><rect x="651.55" y="363.31" width="1.9" height="1.9" fill="#000"/><rect x="653.40" y="363.31" width="1.9" height="1.9" fill="#000"/><rect x="657.10" y="363.31" width="1.9" height="1.9" fill="#000"/><rect x="660.80" y="363.31" width="1.9" height="1.9" fill="#000"/><rect x="646.00" y="365.18" width="1.9" height="1.9" fill="#000"/><rect x="649.70" y="365.18" width="1.9" height="1.9" fill="#000"/><rect x="651.55" y="365.18" width="1.9" height="1.9" fill="#000"/><rect x="655.25" y="365.18" width="1.9" height="1.9" fill="#000"/><rect x="657.10" y="365.18" width="1.9" height="1.9" fill="#000"/><rect x="662.65" y="365.18" width="1.9" height="1.9" fill="#000"/><rect x="664.50" y="365.18" width="1.9" height="1.9" fill="#000"/><rect x="668.20" y="365.18" width="1.9" height="1.9" fill="#000"/><rect x="671.90" y="365.18" width="1.9" height="1.9" fill="#000"/><path d="M679.5 351.9 H686.5 L683 356.9 Z" fill="#1a1a1a"/><text x="696" y="357" font-family="Liberation Sans" font-size="16" fill="#111" textLength="25" lengthAdjust="spacingAndGlyphs">PLT</text><text x="702" y="370.6" font-family="Liberation Sans" font-size="16" fill="#111" textLength="29" lengthAdjust="spacingAndGlyphs">DXF</text><path d="M726.9 337.5 V344.5 M723.4 341 H730.4" stroke="#111" stroke-width="1.6"/><rect x="741" y="341.5" width="29" height="24.5" rx="2.5" fill="none" stroke="#333" stroke-width="2.4"/><path d="M742 362 L750 350 L760 363 M756 358 L762 352 L770 363" fill="none" stroke="#333" stroke-width="2"/><circle cx="762.5" cy="346.5" r="1.8" fill="#333"/><rect x="782.5" y="338.5" width="27" height="27" rx="1" fill="none" stroke="#111" stroke-width="1.8"/><path d="M796 338.5 V365.5 M782.5 352 H809.5" stroke="#111" stroke-width="1.8"/><path d="M786 342.5 H793 M799 342.5 H806 M786 361.5 H793 M799 361.5 H806 M786 342.5 V349 M806 342.5 V349 M786 355 V361.5 M806 355 V361.5" stroke="#999" stroke-width="1" stroke-dasharray="1 1.5"/><path d="M819.0 351.9 H826.0 L822.5 356.9 Z" fill="#1a1a1a"/><rect x="837.5" y="340" width="1" height="30" fill="#c4c4c4"/><path d="M852.5 357.2 L872.2 338.2 L877.6 343.8 L858.8 363 Z" fill="#1e1e1e" stroke="#1e1e1e" stroke-width="1" stroke-linejoin="round"/><path d="M858 358.5 L867.5 349" stroke="#bdbdbd" stroke-width="2.2"/><circle cx="872" cy="343.6" r="1.3" fill="#777"/><path d="M849.2 367 L850.8 360.8 L855.5 365.4 Z" fill="#333" stroke="#333" stroke-width="1.2" stroke-linejoin="round"/><path d="M883.4 351.9 H890.4 L886.9 356.9 Z" fill="#1a1a1a"/><path d="M902 365 H907 V348.8 H922 V365 H933" fill="none" stroke="#111" stroke-width="1.8"/><path d="M904.5 346 V339.5 H924 V346" fill="none" stroke="#333" stroke-width="1.3" stroke-dasharray="1.5 1.5"/><path d="M939.0 351.9 H946.0 L942.5 356.9 Z" fill="#1a1a1a"/><path d="M974 339.5 A13.3 13.3 0 1 1 962 344" fill="none" stroke="#333" stroke-width="2.6"/><path d="M966 345 L972 352" stroke="#333" stroke-width="2.4"/><path d="M972.5 338.5 V344" stroke="#333" stroke-width="2.2"/><circle cx="1021.5" cy="342.5" r="2.8" fill="#000"/><path d="M1016 345 L1010 348.5 Q1008 351 1011 355 L1017 359 L1021 364.5 M1013 350 L1025 357 M1005 345 H1012 M1006 352.5 L1011 349" fill="none" stroke="#000" stroke-width="2.2" stroke-linecap="round"/><path d="M1009 347 Q1015 343 1018 346 L1016 354 Q1012 355 1010 352 Z" fill="#000"/><path d="M1000 368.5 H1031" stroke="#333" stroke-width="1.6" stroke-dasharray="1.6 2.2"/><path d="M1037.1 351.9 H1044.1 L1040.6 356.9 Z" fill="#1a1a1a"/><rect x="1055" y="340" width="1" height="30" fill="#c4c4c4"/><path d="M1064 340 V368 H1096" fill="none" stroke="#222" stroke-width="1.6"/><path d="M1068 363 L1084 347 H1095" fill="none" stroke="#222" stroke-width="1.6"/><path d="M1101.5 351.9 H1108.5 L1105 356.9 Z" fill="#1a1a1a"/><path d="M1881 348 L1896 337 H1915 L1900 348 Z" fill="#cfcfcf" stroke="#555" stroke-width="1.4" stroke-linejoin="round"/><path d="M1881 348 L1885 352 H1904 L1915 343 M1881 352 L1885 356 L1889 359 H1904 L1915 351 M1881 356 L1885 364 L1889 367 H1904 L1915 358" fill="none" stroke="#555" stroke-width="1.4" stroke-linejoin="round"/></svg><!--/TB-->
<div id="canvas" class="a"></div><!--CV--><svg class="a" style="left:0;top:378px" width="1434" height="951" viewBox="0 378 1434 951"><rect x="735" y="378" width="1" height="951" fill="#555"/><rect x="0" y="809" width="1434" height="1" fill="#555"/><rect x="222.8" y="481" width="1005.1" height="730.5" fill="none" stroke="#075a5b" stroke-width="1.9"/><circle cx="493.9" cy="491.7" r="10.6" fill="none" stroke="#00d400" stroke-width="1.5"/><circle cx="682.9" cy="518.5" r="10.6" fill="none" stroke="#00d400" stroke-width="1.5"/><circle cx="975.4" cy="527.4" r="10.6" fill="none" stroke="#00d400" stroke-width="1.5"/><circle cx="1217.0" cy="554.3" r="10.6" fill="none" stroke="#00d400" stroke-width="1.5"/><circle cx="233.0" cy="602.5" r="10.6" fill="none" stroke="#00d400" stroke-width="1.5"/><circle cx="395.0" cy="630.9" r="10.6" fill="none" stroke="#00d400" stroke-width="1.5"/><circle cx="690.2" cy="587.3" r="10.6" fill="none" stroke="#00d400" stroke-width="1.5"/><circle cx="801.3" cy="599.5" r="10.6" fill="none" stroke="#00d400" stroke-width="1.5"/><circle cx="596.0" cy="680.2" r="10.6" fill="none" stroke="#00d400" stroke-width="1.5"/><circle cx="573.2" cy="727.1" r="10.6" fill="none" stroke="#00d400" stroke-width="1.5"/><circle cx="908.2" cy="704.6" r="10.6" fill="none" stroke="#00d400" stroke-width="1.5"/><circle cx="858.6" cy="759.8" r="10.6" fill="none" stroke="#00d400" stroke-width="1.5"/><circle cx="921.4" cy="757.1" r="10.6" fill="none" stroke="#00d400" stroke-width="1.5"/><circle cx="1176.5" cy="784" r="10.6" fill="none" stroke="#00d400" stroke-width="1.5"/><circle cx="537.7" cy="807.9" r="10.6" fill="none" stroke="#00d400" stroke-width="1.5"/><circle cx="546.4" cy="827.4" r="10.6" fill="none" stroke="#00d400" stroke-width="1.5"/><circle cx="735.4" cy="809.5" r="10.6" fill="none" stroke="#00d400" stroke-width="1.5"/><circle cx="357.4" cy="836.3" r="10.6" fill="none" stroke="#00d400" stroke-width="1.5"/><circle cx="867.4" cy="837.9" r="10.6" fill="none" stroke="#00d400" stroke-width="1.5"/><circle cx="843.5" cy="886" r="10.6" fill="none" stroke="#00d400" stroke-width="1.5"/><circle cx="936.4" cy="884.4" r="10.6" fill="none" stroke="#00d400" stroke-width="1.5"/><circle cx="1020.3" cy="890.3" r="10.6" fill="none" stroke="#00d400" stroke-width="1.5"/><circle cx="1024.8" cy="911.7" r="10.6" fill="none" stroke="#00d400" stroke-width="1.5"/><circle cx="622.9" cy="951.8" r="10.6" fill="none" stroke="#00d400" stroke-width="1.5"/><circle cx="729.5" cy="961" r="10.6" fill="none" stroke="#00d400" stroke-width="1.5"/><circle cx="750.1" cy="980.5" r="10.6" fill="none" stroke="#00d400" stroke-width="1.5"/><circle cx="369.5" cy="994.1" r="10.6" fill="none" stroke="#00d400" stroke-width="1.5"/><circle cx="494.0" cy="1013.7" r="10.6" fill="none" stroke="#00d400" stroke-width="1.5"/><circle cx="657.3" cy="1045.2" r="10.6" fill="none" stroke="#00d400" stroke-width="1.5"/><circle cx="932" cy="1045" r="10.6" fill="none" stroke="#00d400" stroke-width="1.5"/><circle cx="1088" cy="1057" r="10.6" fill="none" stroke="#00d400" stroke-width="1.5"/><circle cx="1134.5" cy="1075" r="10.6" fill="none" stroke="#00d400" stroke-width="1.5"/><circle cx="369.5" cy="1103.5" r="10.6" fill="none" stroke="#00d400" stroke-width="1.5"/><circle cx="487.9" cy="1132.1" r="10.6" fill="none" stroke="#00d400" stroke-width="1.5"/><circle cx="725.0" cy="1175.8" r="10.6" fill="none" stroke="#00d400" stroke-width="1.5"/><circle cx="954.5" cy="1201.25" r="10.6" fill="none" stroke="#00d400" stroke-width="1.5"/></svg><!--/CV-->
<!--RP--><div class="a" style="left:1439px;top:379px;width:481px;height:259px;border:1px solid #828790;background:#fff"></div><svg class="a" style="left:1439px;top:379px" width="200" height="100" viewBox="1439 379 200 100"><defs><linearGradient id="eb" x1="0" y1="0" x2="0" y2="1"><stop offset="0" stop-color="#fff"/><stop offset="0.5" stop-color="#f4f4f4"/><stop offset="1" stop-color="#dcdcdc"/></linearGradient></defs><rect x="1454.5" y="390.5" width="12" height="12" rx="1.5" fill="url(#eb)" stroke="#9a9a9a" stroke-width="1"/><rect x="1457.5" y="395.5" width="6" height="2" fill="#4b63a8"/><path d="M1468 396.5 H1476" stroke="#a0a0a0" stroke-width="1" stroke-dasharray="1 1"/><path d="M1488.5 408 V451.5 M1489 423.5 H1502 M1489 451.5 H1502" stroke="#a0a0a0" stroke-width="1" stroke-dasharray="1 1"/></svg><div class="a b" style="left:1478px;top:384px;font-size:18px;letter-spacing:-0.3px">Layer: NoName1</div><div class="a" style="left:1506px;top:411px;font-size:18px;">Pen: Default</div><div class="a" style="left:1503px;top:435px;width:111px;height:27px;background:#0078d7"></div><div class="a" style="left:1506px;top:438px;font-size:18px;color:#fff">Group: 36 [0]</div><div class="a" style="left:1440px;top:642px;width:53px;height:26px;border-top:1.5px solid #a9a9a9;border-left:1.5px solid #a9a9a9;border-right:1px solid #fcfcfc;border-bottom:1px solid #fcfcfc"></div><div class="a" style="left:1447px;top:647.5px;font-size:18.5px">WxH</div><div class="a" style="left:1499.5px;top:647px;font-size:19px;letter-spacing:-0.2px">931.111, 676.944</div><div class="a" style="left:1650px;top:642px;width:26px;height:26px;border-top:1.5px solid #a9a9a9;border-left:1.5px solid #a9a9a9;border-right:1px solid #fcfcfc;border-bottom:1px solid #fcfcfc"></div><div class="a" style="left:1657px;top:647.5px;font-size:18.5px">C</div><div class="a" style="left:1682.5px;top:647px;font-size:19px;letter-spacing:-0.3px">-10.222, -34.139</div><div class="a" style="left:1824px;top:642px;width:26px;height:26px;border-top:1.5px solid #a9a9a9;border-left:1.5px solid #a9a9a9;border-right:1px solid #fcfcfc;border-bottom:1px solid #fcfcfc"></div><div class="a" style="left:1830.5px;top:647.5px;font-size:18.5px">B</div><div class="a" style="left:1856px;top:647px;font-size:19px;letter-spacing:-0.2px">-475.778</div><div class="a" style="left:1441.5px;top:682.5px;width:35px;height:31px;background:#c4dff6;border:1px solid #8fccf8"></div><svg class="a" style="left:1430px;top:672px" width="130" height="46" viewBox="1430 672 130 46"><rect x="1446.5" y="687.5" width="9.5" height="9.5" rx="2" fill="#fff" stroke="#5d9bd6" stroke-width="1.3"/><path d="M1448.8 692.2 H1453.7 M1451.25 689.8 V694.7" stroke="#000" stroke-width="1.6"/><rect x="1446.5" y="701" width="9.5" height="9.5" rx="2" fill="#fff" stroke="#5d9bd6" stroke-width="1.3"/><path d="M1448.8 705.7 H1453.7 M1451.25 703.3 V708.2" stroke="#000" stroke-width="1.6"/><path d="M1458 687 h4.5" stroke="#555" stroke-width="1.3"/><path d="M1458 704 h4.5" stroke="#555" stroke-width="1.3"/><path d="M1458 690 h3 M1465.5 690 h4 M1458 693 h3 M1465.5 693 h4 M1458 696 h3 M1465.5 696 h4 M1458 699 h3 M1465.5 699 h4 M1458 707.5 h3 M1465.5 707.5 h4" stroke="#8c8c9c" stroke-width="1.4"/><text x="1481" y="693.5" font-family="Liberation Serif" font-size="12.5" font-weight="bold" fill="#3555c0">A</text><text x="1481.5" y="709" font-family="Liberation Serif" font-size="12.5" font-weight="bold" fill="#b03030">Z</text><path d="M1499.3 687 V705" stroke="#111" stroke-width="1.5"/><path d="M1496 702.5 L1499.3 709.5 L1502.6 702.5 Z" fill="#111"/><rect x="1513.5" y="685" width="1.6" height="28" fill="#8a8a8a"/><rect x="1524.5" y="687.5" width="23" height="21" rx="1" fill="#e8e8e8" stroke="#b5b5b5" stroke-width="1.2"/><path d="M1525 690.5 H1547" stroke="#c5c5c5" stroke-width="1.5"/><path d="M1527.5 705.5 V693.5 H1535 L1536.5 691.5 H1544.5 V705.5 Z" fill="none" stroke="#c0c0c0" stroke-width="1"/></svg><div class="a" style="left:1439px;top:719px;width:481px;height:517px;border:1px solid #a0a0a0;background:#fff"></div><div class="a" style="left:1440px;top:720px;width:31px;height:515px;background:#f3f6fb"></div><div class="a" style="left:1440px;top:720.5px;width:453px;height:26.5px;background:#f3f6fb"></div><div class="a b" style="left:1478px;top:725.6px;font-size:18px;">Basic</div><div class="a" style="left:1471px;top:747.0px;width:194px;height:25px;background:#f3f6fb"></div><div class="a" style="left:1478px;top:751.1px;font-size:18px;color:#000">Name</div><div class="a" style="left:1671px;top:751.1px;font-size:18px;font-weight:bold;color:#000;letter-spacing:-0.2px;width:222px;overflow:hidden">Group</div><div class="a" style="left:1471px;top:772.0px;width:422px;height:1px;background:#f3f6fb"></div><div class="a" style="left:1665px;top:747.0px;width:1px;height:25px;background:#f3f6fb"></div><div class="a" style="left:1478px;top:776.6px;font-size:18px;color:#000">Description</div><div class="a" style="left:1471px;top:797.5px;width:422px;height:1px;background:#f3f6fb"></div><div class="a" style="left:1665px;top:772.5px;width:1px;height:25px;background:#f3f6fb"></div><div class="a" style="left:1478px;top:802.1px;font-size:18px;color:#000">Color</div><div class="a" style="left:1671px;top:802.1px;font-size:18px;font-weight:bold;color:#000;letter-spacing:-0.2px;width:222px;overflow:hidden">ByLayer</div><div class="a" style="left:1471px;top:823.0px;width:422px;height:1px;background:#f3f6fb"></div><div class="a" style="left:1665px;top:798.0px;width:1px;height:25px;background:#f3f6fb"></div><div class="a" style="left:1478px;top:827.6px;font-size:18px;color:#8c8c8c">Bound</div><div class="a" style="left:1671px;top:827.6px;font-size:18px;color:#8c8c8c;letter-spacing:0.2px;width:222px;overflow:hidden">-475.778,304.333 455.333,</div><div class="a" style="left:1471px;top:848.5px;width:422px;height:1px;background:#f3f6fb"></div><div class="a" style="left:1665px;top:823.5px;width:1px;height:25px;background:#f3f6fb"></div><div class="a" style="left:1478px;top:853.1px;font-size:18px;color:#8c8c8c">Count</div><div class="a" style="left:1671px;top:853.1px;font-size:18px;color:#8c8c8c;letter-spacing:-0.2px;width:222px;overflow:hidden">36</div><div class="a" style="left:1471px;top:874.0px;width:422px;height:1px;background:#f3f6fb"></div><div class="a" style="left:1665px;top:849.0px;width:1px;height:25px;background:#f3f6fb"></div><div class="a" style="left:1478px;top:878.6px;font-size:18px;color:#000">Items</div><div class="a" style="left:1671px;top:878.6px;font-size:18px;font-weight:bold;color:#000;letter-spacing:-0.2px;width:222px;overflow:hidden">IEntity[] Array</div><div class="a" style="left:1471px;top:899.5px;width:422px;height:1px;background:#f3f6fb"></div><div class="a" style="left:1665px;top:874.5px;width:1px;height:25px;background:#f3f6fb"></div><div class="a" style="left:1478px;top:904.1px;font-size:18px;color:#000">Offsets</div><div class="a" style="left:1671px;top:904.1px;font-size:18px;font-weight:bold;color:#000;letter-spacing:-0.2px;width:222px;overflow:hidden">Offset[] Array</div><div class="a" style="left:1471px;top:925.0px;width:422px;height:1px;background:#f3f6fb"></div><div class="a" style="left:1665px;top:900.0px;width:1px;height:25px;background:#f3f6fb"></div><div class="a" style="left:1478px;top:929.6px;font-size:18px;color:#8c8c8c">Offset Counts</div><div class="a" style="left:1671px;top:929.6px;font-size:18px;color:#8c8c8c;letter-spacing:-0.2px;width:222px;overflow:hidden">0</div><div class="a" style="left:1471px;top:950.5px;width:422px;height:1px;background:#f3f6fb"></div><div class="a" style="left:1665px;top:925.5px;width:1px;height:25px;background:#f3f6fb"></div><div class="a" style="left:1440px;top:950.0px;width:453px;height:26.5px;background:#f3f6fb"></div><div class="a b" style="left:1478px;top:955.1px;font-size:18px;">Hatch</div><div class="a" style="left:1478px;top:980.6px;font-size:18px;color:#000">Hatch</div><div class="a" style="left:1671px;top:980.6px;font-size:18px;font-weight:bold;color:#000;letter-spacing:-0.2px;width:222px;overflow:hidden">False</div><div class="a" style="left:1471px;top:1001.5px;width:422px;height:1px;background:#f3f6fb"></div><div class="a" style="left:1665px;top:976.5px;width:1px;height:25px;background:#f3f6fb"></div><div class="a" style="left:1478px;top:1006.1px;font-size:18px;color:#000">Hatch Mode</div><div class="a" style="left:1671px;top:1006.1px;font-size:18px;font-weight:bold;color:#000;letter-spacing:-0.2px;width:222px;overflow:hidden">Line</div><div class="a" style="left:1471px;top:1027.0px;width:422px;height:1px;background:#f3f6fb"></div><div class="a" style="left:1665px;top:1002.0px;width:1px;height:25px;background:#f3f6fb"></div><div class="a" style="left:1478px;top:1031.6px;font-size:18px;color:#000">Hatch Angle</div><div class="a" style="left:1671px;top:1031.6px;font-size:18px;font-weight:bold;color:#000;letter-spacing:-0.2px;width:222px;overflow:hidden">90</div><div class="a" style="left:1471px;top:1052.5px;width:422px;height:1px;background:#f3f6fb"></div><div class="a" style="left:1665px;top:1027.5px;width:1px;height:25px;background:#f3f6fb"></div><div class="a" style="left:1478px;top:1057.1px;font-size:18px;color:#000">Hatch Interval</div><div class="a" style="left:1671px;top:1057.1px;font-size:18px;font-weight:bold;color:#000;letter-spacing:-0.2px;width:222px;overflow:hidden">0.2</div><div class="a" style="left:1471px;top:1078.0px;width:422px;height:1px;background:#f3f6fb"></div><div class="a" style="left:1665px;top:1053.0px;width:1px;height:25px;background:#f3f6fb"></div><div class="a" style="left:1478px;top:1082.6px;font-size:18px;color:#000">Hatch Exclude</div><div class="a" style="left:1671px;top:1082.6px;font-size:18px;font-weight:bold;color:#000;letter-spacing:-0.2px;width:222px;overflow:hidden">0</div><div class="a" style="left:1471px;top:1103.5px;width:422px;height:1px;background:#f3f6fb"></div><div class="a" style="left:1665px;top:1078.5px;width:1px;height:25px;background:#f3f6fb"></div><div class="a" style="left:1440px;top:1103.0px;width:453px;height:26.5px;background:#f3f6fb"></div><div class="a b" style="left:1478px;top:1108.1px;font-size:18px;">Status</div><div class="a" style="left:1478px;top:1133.6px;font-size:18px;color:#000">Selected</div><div class="a" style="left:1671px;top:1133.6px;font-size:18px;font-weight:bold;color:#000;letter-spacing:-0.2px;width:222px;overflow:hidden">True</div><div class="a" style="left:1471px;top:1154.5px;width:422px;height:1px;background:#f3f6fb"></div><div class="a" style="left:1665px;top:1129.5px;width:1px;height:25px;background:#f3f6fb"></div><div class="a" style="left:1478px;top:1159.1px;font-size:18px;color:#000">Visible</div><div class="a" style="left:1671px;top:1159.1px;font-size:18px;font-weight:bold;color:#000;letter-spacing:-0.2px;width:222px;overflow:hidden">True</div><div class="a" style="left:1471px;top:1180.0px;width:422px;height:1px;background:#f3f6fb"></div><div class="a" style="left:1665px;top:1155.0px;width:1px;height:25px;background:#f3f6fb"></div><div class="a" style="left:1478px;top:1184.6px;font-size:18px;color:#000">Markerable</div><div class="a" style="left:1671px;top:1184.6px;font-size:18px;font-weight:bold;color:#000;letter-spacing:-0.2px;width:222px;overflow:hidden">True</div><div class="a" style="left:1471px;top:1205.5px;width:422px;height:1px;background:#f3f6fb"></div><div class="a" style="left:1665px;top:1180.5px;width:1px;height:25px;background:#f3f6fb"></div><div class="a" style="left:1478px;top:1210.1px;font-size:18px;color:#000">Mark Path</div><div class="a" style="left:1671px;top:1210.1px;font-size:18px;font-weight:bold;color:#000;letter-spacing:-0.2px;width:222px;overflow:hidden">False</div><div class="a" style="left:1471px;top:1231.0px;width:422px;height:1px;background:#f3f6fb"></div><div class="a" style="left:1665px;top:1206.0px;width:1px;height:25px;background:#f3f6fb"></div><div class="a" style="left:1893px;top:720px;width:26px;height:515px;background:#f0f0f0"></div><div class="a" style="left:1895px;top:747px;width:22px;height:318px;background:#cdcdcd"></div><svg class="a" style="left:1439px;top:719px" width="481" height="517" viewBox="1439 719 481 517"><path d="M1450 731.0 L1455 736.0 L1460 731.0" fill="none" stroke="#4a4a4a" stroke-width="2"/><path d="M1452 882.0 L1457 887.0 L1452 892.0" fill="none" stroke="#9a9a9a" stroke-width="1.8"/><path d="M1452 907.5 L1457 912.5 L1452 917.5" fill="none" stroke="#9a9a9a" stroke-width="1.8"/><path d="M1450 960.5 L1455 965.5 L1460 960.5" fill="none" stroke="#4a4a4a" stroke-width="2"/><path d="M1450 1113.5 L1455 1118.5 L1460 1113.5" fill="none" stroke="#4a4a4a" stroke-width="2"/><path d="M1901 738 L1906 733 L1911 738" fill="none" stroke="#606060" stroke-width="2"/><path d="M1901 1218 L1906 1223 L1911 1218" fill="none" stroke="#606060" stroke-width="2"/></svg><div class="a" style="left:1439px;top:1241px;width:481px;height:88px;border:1px solid #a0a0a0;background:#f0f0f0"></div><div class="a b" style="left:1448px;top:1247px;font-size:18px;">Name</div><div class="a" style="left:1448px;top:1269px;font-size:17.5px">엔티티의 이름</div><!--/RP-->
<div id="status" class="a"></div>
<div id="sline" class="a"></div>
<!--BT--><div class="a b" style="left:6px;top:1344px;font-size:18px;letter-spacing:-1px;">NoName</div><div class="a" style="left:80px;top:1334px;width:149px;height:37px;background:#e6e6e6;border:1px solid #b9b9b9"></div><div class="a" style="left:255px;top:1344px;font-size:18px;letter-spacing:-1px;">Y: 45.430</div><div class="a" style="left:370.5px;top:1344px;font-size:18px;letter-spacing:-1px;">X: 536.644</div><div class="a" style="left:475.5px;top:1344px;font-size:18px;letter-spacing:-1px;">Render: 0 ms</div><div class="a" style="left:597px;top:1344px;font-size:18px;letter-spacing:-1px;">Selected: 1</div><div class="a" style="left:18px;top:1389.5px;width:123px;height:107px;border:1px solid #dcdcdc"></div><div class="a" style="left:157.5px;top:1389.5px;width:123.0px;height:107px;border:1px solid #dcdcdc"></div><div class="a" style="left:1780px;top:1389.5px;width:121.5px;height:107px;border:1px solid #dcdcdc"></div><svg class="a" style="left:0;top:1377px" width="1920" height="131" viewBox="0 1377 1920 131"><defs><linearGradient id="rb" x1="1" y1="0" x2="0" y2="1"><stop offset="0" stop-color="#f08a24"/></linearGradient></defs><rect x="53.5" y="1407" width="54.5" height="54.5" rx="5" fill="#5f5f5f"/><rect x="59.5" y="1413" width="17" height="35" fill="#c8c8c8"/><rect x="59.5" y="1443" width="17" height="12.5" fill="#c8c8c8"/><rect x="59.5" y="1413" width="17" height="22" fill="#c8c8c8"/><rect x="59.5" y="1441" width="17" height="14.5" fill="#c8c8c8"/><rect x="83.5" y="1413" width="19" height="12.5" fill="#c8c8c8"/><rect x="83.5" y="1430" width="19" height="25.5" fill="#c8c8c8"/><rect x="59.5" y="1439.5" width="17" height="4" fill="#5f5f5f"/><clipPath id="sc"><rect x="186" y="1404.5" width="69" height="57"/></clipPath><g clip-path="url(#sc)"><rect x="186" y="1404.5" width="69" height="57" fill="#f0952e"/><circle cx="191" cy="1503.6" r="100.5" fill="#dfca4e"/><circle cx="191" cy="1503.6" r="83.5" fill="#7fbd5e"/><circle cx="191" cy="1503.6" r="67" fill="#56a5d3"/><circle cx="191" cy="1503.6" r="50" fill="#de5b8f"/></g><path d="M186.5 1461 V1405 H255" fill="none" stroke="#444" stroke-width="1.3"/><circle cx="1840.4" cy="1443.2" r="30" fill="#5e5e5e"/><path d="M1851.53 1425.39 A21 21 0 1 1 1829.27 1425.39" fill="none" stroke="#f0f0f0" stroke-width="6.8" stroke-linecap="round"/><path d="M1840.4 1422.5 V1440.2" stroke="#f0f0f0" stroke-width="6" stroke-linecap="round"/></svg><div class="a b" style="left:57px;top:1469px;font-size:19px">Auto</div><div class="a" style="left:57px;top:1488.5px;width:13px;height:2px;background:#000"></div><div class="a b" style="left:182px;top:1469px;font-size:19px">Sirius™</div><div class="a" style="left:182px;top:1488.5px;width:13px;height:2px;background:#000"></div><!--/BT-->
</body></html>
